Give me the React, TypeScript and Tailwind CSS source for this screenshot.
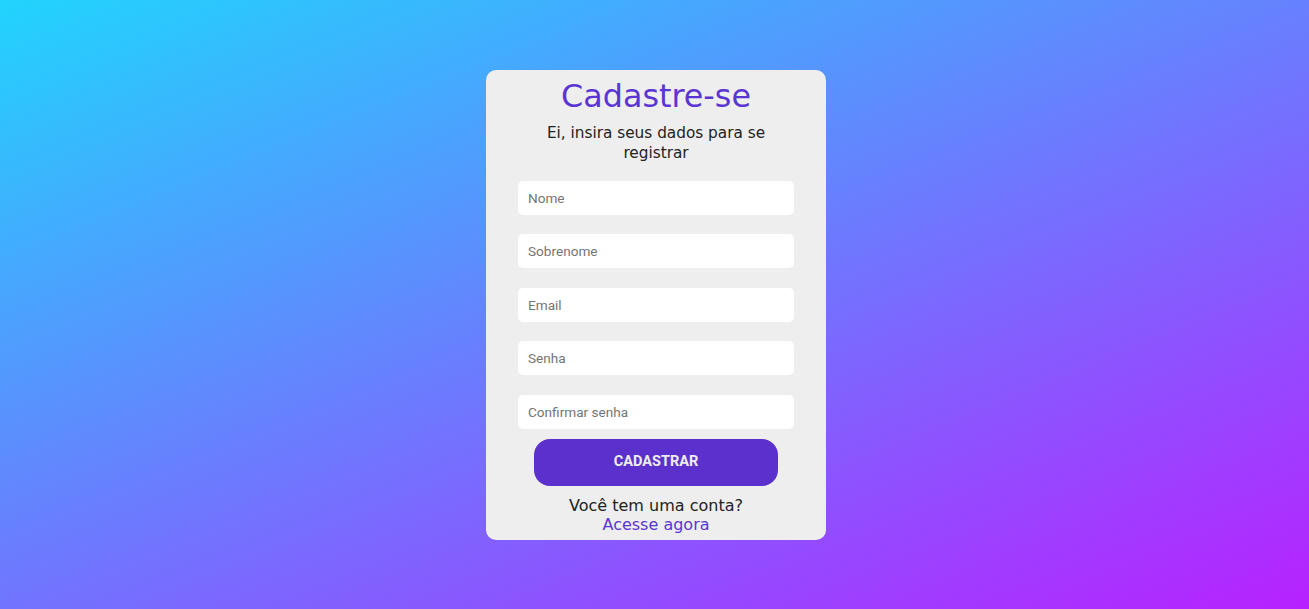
export default function App() {
  const fields = ["Nome", "Sobrenome", "Email", "Senha", "Confirmar senha"];

  return (
    <div className="flex h-[609px] w-full items-center justify-center bg-[linear-gradient(158deg,#21d4fd,#b721ff)]">
      <div className="ml-[3px] flex h-[470px] w-[340px] flex-col items-center rounded-[10px] bg-[#eeeeee] font-['DejaVu_Sans',sans-serif]">
        <h1 className="h-[52px] text-[31.8px] leading-[52px] text-[#5b35d3]">Cadastre-se</h1>
        <p className="mt-px text-center text-[15.3px] leading-[20px] text-[#222]">
          Ei, insira seus dados para se
          <br />
          registrar
        </p>

        <form className="mt-[18px] flex flex-col items-center gap-[19.5px]">
          {fields.map((f) => (
            <input
              key={f}
              type={f === "Senha" || f === "Confirmar senha" ? "password" : "text"}
              placeholder={f}
              className="h-[34px] w-[276px] rounded-[5px] bg-white px-[10px] font-['Roboto',sans-serif] text-[13.6px] text-[#333] placeholder:text-[#757575] outline-none"
            />
          ))}
        </form>

        <button className="mt-[10px] h-[47px] w-[244px] rounded-[16px] bg-[#5b30cc] font-['Roboto',sans-serif] text-[14.5px] font-bold text-[#eeeeee]">
          CADASTRAR
        </button>

        <div className="mt-[10px] text-center text-[16px] leading-[19px]">
          <p className="text-[#222]">Você tem uma conta?</p>
          <a href="#" className="text-[#5b35d3]">Acesse agora</a>
        </div>
      </div>
    </div>
  );
}
